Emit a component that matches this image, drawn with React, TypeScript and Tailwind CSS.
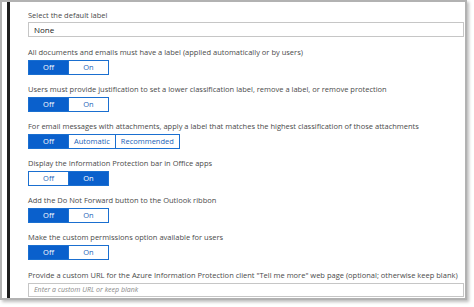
const font = { fontFamily: '"Open Sans", "Noto Sans", sans-serif' };

type Toggle = { label: string; options: string[]; selected: number };

const toggles: Toggle[] = [
  { label: 'All documents and emails must have a label (applied automatically or by users)', options: ['Off', 'On'], selected: 0 },
  { label: 'Users must provide justification to set a lower classification label, remove a label, or remove protection', options: ['Off', 'On'], selected: 0 },
  { label: 'For email messages with attachments, apply a label that matches the highest classification of those attachments', options: ['Off', 'Automatic', 'Recommended'], selected: 0 },
  { label: 'Display the Information Protection bar in Office apps', options: ['Off', 'On'], selected: 1 },
  { label: 'Add the Do Not Forward button to the Outlook ribbon', options: ['Off', 'On'], selected: 0 },
  { label: 'Make the custom permissions option available for users', options: ['Off', 'On'], selected: 0 },
];

function Segmented({ options, selected }: { options: string[]; selected: number }) {
  return (
    <div className="flex h-[15px] mt-[3px]">
      {options.map((opt, i) => (
        <div
          key={opt}
          className={
            'min-w-[41px] px-[5px] flex items-center justify-center border border-[#1a6fd0] text-[7.5px] leading-none ' +
            (i > 0 ? '-ml-px ' : '') +
            (i === selected ? 'bg-[#0a60cc] text-white' : 'bg-white text-[#1a5fb8]')
          }
        >
          {opt}
        </div>
      ))}
    </div>
  );
}

export default function App() {
  return (
    <div className="w-[474px] h-[307px] bg-white overflow-hidden" style={font}>
      <div className="w-[467px] h-[300px] border-2 border-[#b2b2b2] shadow-[2px_2px_3px_#bdbdbd] flex pl-[5px]">
        <div className="w-[3px] h-full bg-[#1e1e1e]" />
        <div className="flex-1 pl-[18px] pt-[8px] pr-[1px] text-[#4a4a4a] text-[7.5px]">
          <div className="h-[10px] leading-[10px]">Select the default label</div>
          <div className="mt-[2px] h-[15px] border border-[#c6c6c6] flex items-center px-[5px] text-[#222] text-[8px]">
            None
          </div>
          {toggles.map((t, i) => (
            <div key={t.label} className={i === 0 ? 'mt-[10px]' : 'mt-[9px]'}>
              <div className="h-[10px] leading-[10px] whitespace-nowrap">{t.label}</div>
              <Segmented options={t.options} selected={t.selected} />
            </div>
          ))}
          <div className="mt-[10px] h-[10px] leading-[10px] whitespace-nowrap">
            Provide a custom URL for the Azure Information Protection client "Tell me more" web page (optional; otherwise keep blank)
          </div>
          <div className="mt-[3px] h-[14px] border border-[#c6c6c6] flex items-center px-[5px] text-[#888] italic text-[7px]">
            Enter a custom URL or keep blank
          </div>
        </div>
      </div>
    </div>
  );
}
